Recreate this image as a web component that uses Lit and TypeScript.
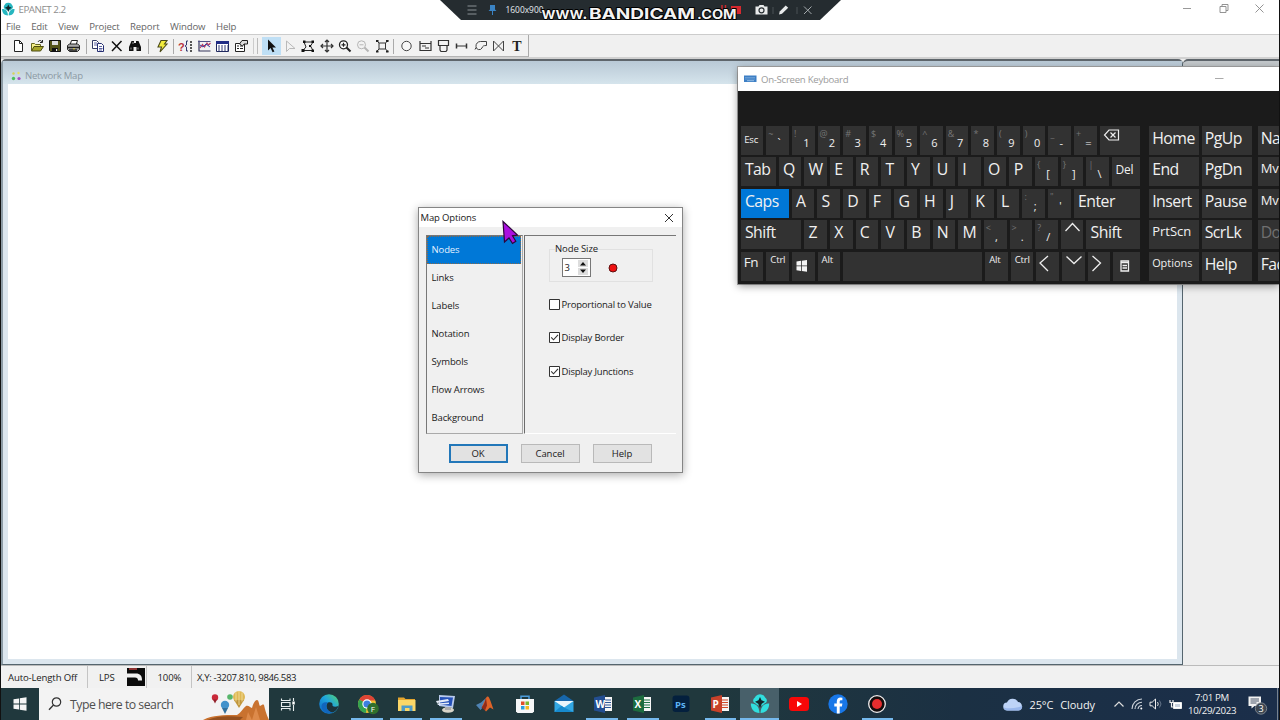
import { LitElement, html, css, svg, nothing } from "lit";
import { customElement } from "lit/decorators.js";

const icon = (w: number, h: number, body: unknown) =>
  html`<svg class="ic" width=${w} height=${h} viewBox="0 0 ${w} ${h}">${body}</svg>`;

const flower = (c: string) => svg`
  <circle cx="10" cy="6" r="5.800" fill=${c}/><circle cx="6" cy="6.500" r="2.800" fill=${c}/><circle cx="14" cy="6.500" r="2.800" fill=${c}/>
  <path d="M.8 9.500c5-.5 8.500 3 8.700 9.500C4 19 .8 15 .8 9.500z" fill=${c}/>
  <path d="M19.200 9.500c-5-.5-8.500 3-8.700 9.500C16 19 19.200 15 19.200 9.500z" fill=${c}/>
  <path d="m10 3 1.500 3.200 3.500 1.500-3.200 2L10 14l-1.800-4.300-3.200-2 3.500-1.500z" fill="#14262b"/>`;

/* Toolbar glyphs, drawn on an 18 x 16 grid */
const T: Record<string, unknown> = {
  new: svg`<path d="M5.500 2.500h5l3 3v8h-8z" fill="#fff" stroke="#222"/><path d="M10.500 2.500v3h3" fill="none" stroke="#222"/>`,
  open: svg`<path d="M3.500 12.500v-7h3l1 1h5v2" fill="#f5f08a" stroke="#66651e"/><path d="M3.500 13 6 8.500h9.500L12.500 13z" fill="#a8a62a" stroke="#4d4b10"/><path d="M10 4c1-2 3-2 4 0m.500-2v2.500H12" fill="none" stroke="#222"/>`,
  save: svg`<path d="M3.500 2.500h11v11h-10l-1-1z" fill="#55551a" stroke="#111"/><path d="M6 3h6v4H6z" fill="#ddd"/><path d="M6 10h6v3.500H6z" fill="#111"/><path d="M10 11h1.200v2H10z" fill="#eee"/>`,
  print: svg`<path d="M6 7 7.500 2.500h6L12 7" fill="#fff" stroke="#222"/><path d="M3.500 7.500 5.500 6h8l2 1.500v4l-2 2h-8l-2-2z" fill="#aaa" stroke="#222"/><path d="M4 9.500h11M5 12h8" stroke="#222" stroke-width="1.300"/><path d="M9 10.800h2" stroke="#dfd23b"/>`,
  copy: svg`<path d="M3.500 2.500h4l2 2v6h-6z" fill="#fff" stroke="#333b66"/><path d="M8.500 5.500h4l2 2v6h-6z" fill="#fff" stroke="#242d72"/><path d="M5 5h3M5 7h3M10 8.500h3M10 10.500h3.500M10 12h3" stroke="#333b88" stroke-width=".8"/>`,
  del: svg`<path d="M4 3.500 13.500 13M13.500 3 4 13" stroke="#111" stroke-width="1.500"/>`,
  find: svg`<path d="M5.500 3h2.500v2h2V3h2.500l2.500 6v4h-4.500V9h-3v4H3V9z" fill="#111"/><path d="M5 9.500v2M12 9.500v2M7 4v2" stroke="#bbb" stroke-width=".8"/>`,
  run: svg`<path d="M8 2.500h6L11.500 6h2.500L7 14l1.500-5H5z" fill="#f2ec3d" stroke="#4b4a18" stroke-width="1.100"/>`,
  query: svg`<text x="2" y="12.500" class="q">?</text><path d="M12 3h-1.500v4L9 8l1.500 1v4H12" fill="none" stroke="#333a70"/><path d="M15 3v11" stroke="#222" stroke-width="1.500" stroke-dasharray="2 1"/>`,
  graph: svg`<path d="M4 2.500V13h11.500" fill="none" stroke="#36365d" stroke-width="1.200"/><path d="M3 3.500h12.500" stroke="#525287"/><path d="m5 10 2.500-3.500L9.500 9l2.500-4 1.500 2 2-2" fill="none" stroke="#b83a63" stroke-width="1.200"/><path d="m5 7 3 2 3-3 4 3" fill="none" stroke="#3b46a5"/>`,
  table: svg`<path d="M3.500 3.500h12v10h-12z" fill="#fff" stroke="#20295f"/><path d="M3 3h13v3H3z" fill="#202c85"/><path d="M5 8h10M5 10h10M5 12h10" stroke="#333b75" stroke-dasharray="2 1"/>`,
  opts: svg`<path d="M3.500 5.500h9v8h-9z" fill="#fff" stroke="#222"/><path d="M5 8h2m1 0h3M5 10.500h2m1 0h3" stroke="#222" stroke-width="1.200"/><path d="M7.500 6 10 2.500h5.500v3.500H12L10.500 8z" fill="#ddd" stroke="#222"/>`,
  arrow: svg`<path d="M6 1.500v11l2.600-2.400 2 4.200 1.800-.9-2-4H14z" fill="#111"/>`,
  vertex: svg`<path d="M5.500 3v10.500l3-3H14z" fill="none" stroke="#b9b9b9"/>`,
  region: svg`<path d="M4 12.500 7 9 5 4h9l-2.500 4 2.500 4.500z" fill="none" stroke="#222"/><path d="M2.500 11h3v3h-3zM4 2.500h2.500V5H4zM12.500 2.500H15V5h-2.500zM12.500 11.500H15V14h-2.500zM10 7h2v2h-2z" fill="#111"/>`,
  pan: svg`<path d="M9 2v12M3 8h12M7 4l2-2 2 2M7 12l2 2 2-2M5 6 3 8l2 2M13 6l2 2-2 2" fill="none" stroke="#333" stroke-width="1.200"/>`,
  zin: svg`<circle cx="7.500" cy="6.800" r="4" fill="#fff" stroke="#222" stroke-width="1.300"/><path d="M5.500 6.800h4M7.500 4.800v4" stroke="#222" stroke-width="1.200"/><path d="m10.500 9.500 4 4" stroke="#222" stroke-width="2"/>`,
  zout: svg`<circle cx="7.500" cy="6.800" r="4" fill="none" stroke="#b5b5b5"/><path d="M5.500 6.800h4" stroke="#b5b5b5"/><path d="m10.500 9.500 4 4" stroke="#b5b5b5" stroke-width="2"/>`,
  full: svg`<path d="M6 5h6.500v6H6z" fill="none" stroke="#333"/><path d="m3.500 2.500 2.500 2.500M15 2.500 12.500 5M3.500 13.500 6 11M15 13.500 12.500 11" stroke="#333"/><path d="M3 2h2.500v2H3zM13 2h2.500v2H13zM3 12.500h2.500v2H3zM13 12.500h2.500v2H13z" fill="#222"/>`,
  node: svg`<circle cx="9.500" cy="8" r="4.700" fill="#f7f7f7" stroke="#444"/>`,
  reservoir: svg`<path d="M4 3v9.500h11V3M4 5.500h11" fill="none" stroke="#333" stroke-width="1.200"/><path d="M6 8h4M9 10h4" stroke="#333" stroke-width="1.200"/>`,
  tank: svg`<path d="M4.500 2.500h10v5h-10zM6 7.500V12l1 1.500h5l1-1.500V7.500" fill="#f4f4f4" stroke="#333" stroke-width="1.200"/>`,
  pipe: svg`<path d="M4 8h11" stroke="#333"/><path d="M4.500 5.500v5M14.500 5.500v5" stroke="#333" stroke-width="1.500"/>`,
  pump: svg`<path d="M15.500 3.500h-6a4.500 4.500 0 0 0-4.500 5 3.200 3.200 0 0 0 6 1.500c.7-2 1.500-2.500 4.500-2.500z" fill="#f4f4f4" stroke="#444"/><path d="m5 9.500-1 2" stroke="#444"/>`,
  valve: svg`<path d="m4.500 3 10 10V3l-10 10z" fill="none" stroke="#444"/>`,
  text: svg`<text x="4.300" y="12.800" class="tt">T</text>`,
};
const bar: string[] = ["new", "open", "save", "print", "|6.4", "copy", "del", "find", "|8.600", "run", "|5.200", "query", "graph", "table", "opts", "grip",
  "arrow", "vertex", "region", "pan", "zin", "zout", "full", "|6", "node", "reservoir", "tank", "pipe", "pump", "valve", "text"];

/* Key: [width, label, kind, shifted label] */
type Key = [number, string, string?, string?];
const U = 22.65;
const rows: Key[][] = [
  [[U, "Esc", "esc"], ...([["`", "~"], ["1", "!"], ["2", "@"], ["3", "#"], ["4", "$"], ["5", "%"], ["6", "^"], ["7", "&"], ["8", "*"], ["9", "("], ["0", ")"], ["-", "_"], ["=", "+"]].map(([a, b]) => [U, a, "two", b]) as Key[]), [40, "bksp", "icon"]],
  [[35, "Tab"], ...([..."QWERTYUIOP"].map((c) => [U, c]) as Key[]), [U, "[", "two", "{"], [U, "]", "two", "}"], [U, "\\", "two", "|"], [27.5, "Del", "mid"]],
  [[48, "Caps", "caps"], ...([..."ASDFGHJKL"].map((c) => [U, c]) as Key[]), [U, ";", "two", ":"], [U, "'", "two", "\""], [66.500, "Enter"]],
  [[60.700, "Shift"], ...([..."ZXCVBNM"].map((c) => [U, c]) as Key[]), [U, ",", "two", "<"], [U, ".", "two", ">"], [U, "/", "two", "?"], [U, "up", "icon"], [53.500, "Shift"]],
  [[U, "Fn", "fn"], [U, "Ctrl", "sm"], [U, "win", "icon"], [U, "Alt", "sm"], [138.900, ""], [U, "Alt", "sm"], [U, "Ctrl", "sm"], [U, "left", "icon"], [U, "down", "icon"], [U, "right", "icon"], [27, "menu", "icon"]],
];
const navRows: Key[][] = [
  [[49.500, "Home"], [50, "PgUp"], [50, "Nav"]],
  [[49.500, "End"], [50, "PgDn"], [50, "Mv Up", "nav2"]],
  [[49.500, "Insert"], [50, "Pause"], [50, "Mv Dn", "nav2"]],
  [[49.500, "PrtScn", "nav2"], [50, "ScrLk"], [50, "Dock", "dim"]],
  [[49.500, "Options", "opt"], [50, "Help"], [50, "Fade"]],
];
const KI: Record<string, unknown> = {
  bksp: svg`<path d="M9 4h9.500v10H9l-4.500-5z" fill="none" stroke="#eee" stroke-width="1.200"/><path d="m10.500 6.500 5 5m0-5-5 5" stroke="#eee" stroke-width="1.200"/>`,
  up: svg`<path d="m4.500 11 7-7.500 7 7.500" fill="none" stroke="#eee" stroke-width="1.300"/>`,
  down: svg`<path d="m4.500 4.500 7.500 7 7.500-7" fill="none" stroke="#eee" stroke-width="1.300"/>`,
  left: svg`<path d="m12 4-8 7 8 8" fill="none" stroke="#eee" stroke-width="1.300"/>`,
  right: svg`<path d="m4.500 4 8 7-8 8" fill="none" stroke="#eee" stroke-width="1.300"/>`,
  win: svg`<path d="m4.500 9.500 4.500-.7v4.700H4.500zM9.800 8.700l5.200-.7v5.500H9.800zM4.500 14.300H9V19l-4.500-.7zM9.800 14.300H15v5.500L9.800 19z" fill="#f4f4f4"/>`,
  menu: svg`<path d="M8 9h7.500v10H8z" fill="none" stroke="#eee" stroke-width="1.300"/><path d="M8 10.500h7.500M9.500 13.500h4.500M9.500 16h4.500" stroke="#eee" stroke-width="1.300"/>`,
};

/* Taskbar icons on a 22 x 22 grid: [body, state] */
const office = (c: string, d: string, l: string) => svg`<path d="M11 4h9v14h-9z" fill="#f6f6f6"/><path d="M13 7h6M13 9.500h6M13 12h6M13 14.500h6" stroke=${c} stroke-width="1.200"/><path d="M2 4.500 13 2v18L2 17.500z" fill=${d}/><text x="3.500" y="15" class="ol">${l}</text>`;
const tasks: [unknown, string][] = [
  [svg`<defs><linearGradient id="eg" x1="0" y1="1" x2="1" y2="0"><stop offset="0" stop-color="#0a63c4"/><stop offset=".55" stop-color="#1fa5dc"/><stop offset="1" stop-color="#57d66b"/></linearGradient></defs><circle cx="11" cy="11" r="9.800" fill="url(#eg)"/><path d="M10 9.500c3-1 5 .5 4.500 2.500-.3 1.600 2.500 2.200 6 1-1 3.500-4 6-6 6.500-5 0-8-7-4.500-10z" fill="#1c3239"/><path d="M10 9.500c-3.500 2-1.500 9 4.500 10-5 2.500-11-1-11-6.500 0-3 3-4.500 6.500-3.500z" fill="#1166bd"/>`, ""],
  [svg`<circle cx="10" cy="11" r="9" fill="#f1c232"/><path d="M10 11 2.300 6.400A9 9 0 0 1 18.300 7.500H10z" fill="#df4435"/><path d="M10 11 2.300 6.400A9 9 0 0 0 9 20z" fill="#33a350"/><circle cx="10" cy="11" r="4.700" fill="#fff"/><circle cx="10" cy="11" r="3.600" fill="#3c7fe0"/><circle cx="16" cy="15.500" r="5.800" fill="#30702c"/><text x="13.700" y="18.500" class="cf">F</text>`, "run"],
  [svg`<path d="M2 4.500h6l1.500 1.500H19v3H2z" fill="#e4a52e"/><path d="M2 7h17.500v11H2z" fill="#fbd768"/><path d="M5.500 18v-5.500h11V18h-3v-3H9v3z" fill="#4e9bc9"/>`, "run"],
  [svg`<path d="m4 2 16 1-2 12-14-2z" fill="#b9cbed"/><path d="m5 4 13 .5-1.500 8.500L5 11.500z" fill="#2551b8"/><path d="m1 8 12-2 1 2L2 10zM2 10.500l12-1v1.500L3 12z" fill="#e4ebf7"/><ellipse cx="13" cy="17" rx="6" ry="2.800" fill="#d9d5c9"/><path d="M10 14h6v3h-6z" fill="#aaa"/>`, "run"],
  [svg`<path d="m2 12 5-2.500 5-4.500-1 7-4.500 5z" fill="#4f83b4"/><path d="M12 5c2-3 3-1 4.500 3l3 8.500-3.500-2-4 4-4-5z" fill="#df6328"/><path d="M12 5c-1 3.500-2 7-4.500 9.500l3.500 3 2-5z" fill="#8e2b1b"/>`, ""],
  [svg`<path d="M7 6V3.200h8V6" fill="none" stroke="#4b9cdc" stroke-width="1.500"/><path d="M2 6h18v12.500l-1.500 1.500h-15L2 18.500z" fill="#f6f7f8"/><path d="M7 8.500h3.500V12H7z" fill="#e14d2a"/><path d="M11.500 8.500H15V12h-3.500z" fill="#7cb82f"/><path d="M7 13h3.500v3.500H7z" fill="#2a9ee0"/><path d="M11.500 13H15v3.500h-3.500z" fill="#f6b825"/>`, ""],
  [svg`<path d="m1.500 8 9.500-6.500L20.500 8z" fill="#1767ac"/><path d="M1.500 8h19v11h-19z" fill="#32a7e3"/><path d="M1.500 8h19L11 14.500z" fill="#eaf5fb"/><path d="m1.500 19 7-6.200L11 14.500l9.500 4.500z" fill="#178acd"/>`, ""],
  [office("#2b579a", "#234e91", "W"), "run"],
  [office("#217346", "#1d6c3f", "X"), "run"],
  [svg`<rect x="2.500" y="2.500" width="17" height="16.500" rx="3" fill="#04203e"/><text x="5" y="14.800" class="ps">Ps</text>`, ""],
  [office("#d24726", "#c7412a", "P"), "run"],
  [svg`<g transform="translate(1 1)">${flower("#31dede")}</g>`, "run active"],
  [svg`<rect x="1" y="4" width="20" height="14" rx="3.500" fill="#f80808"/><path d="m9 8 5 3-5 3z" fill="#fff"/>`, ""],
  [svg`<circle cx="11" cy="11" r="9.700" fill="#1877e8"/><path d="M9.800 20.500v-7H7.300v-3h2.500V8.400c0-2.500 1.500-3.800 3.600-3.800l2 .2v2.500h-1.300c-1.100 0-1.400.7-1.400 1.400v1.800h2.700l-.5 3h-2.200v7z" fill="#fff"/>`, ""],
  [svg`<circle cx="11" cy="11" r="8.300" fill="#150d0d" stroke="#f1eded" stroke-width="1.300"/><circle cx="11" cy="11" r="5" fill="#e52d2e"/>`, "run"],
];

const base = css`
  * { box-sizing: border-box; }
  svg { display: block; flex: none; overflow: visible; }
`;

@customElement("screen-keyboard")
export class ScreenKeyboard extends LitElement {
  static styles = [base, css`
    :host { display: flex; flex-direction: column; width: 541px; height: 217px; background: #1b1b1b; overflow: hidden;
      font-family: "Open Sans", "Noto Sans", sans-serif; }
    .title { height: 24px; background: #fff; display: flex; align-items: center; padding: 0 55px 0 6px; gap: 4px;
      font-size: 9.600px; color: #9c9c9c; }
    .title b { font-weight: 400; flex: 1; letter-spacing: -.27px; }
    .keys { display: flex; gap: 9px; padding: 35px 0 0 2.700px; }
    .block { display: flex; flex-direction: column; gap: 2.700px; flex: none; }
    .row { display: flex; gap: 3px; height: 28.800px; }
    .nav .row > :nth-child(3) { margin-left: 3px; }
    .key { flex: none; background: #323232; color: #f0f0f0; padding: 0 0 0 4.200px; overflow: hidden; white-space: nowrap;
      font-size: 15.800px; line-height: 24px; letter-spacing: -.5px; }
    .nav .key { padding-left: 2.800px; }
    .caps { background: #0077d7; }
    .key.esc { font-size: 9.600px; line-height: 27px; padding-left: 3.500px; letter-spacing: -.2px; }
    .key.sm { font-size: 9.600px; line-height: 16px; padding-left: 4px; letter-spacing: -.2px; }
    .key.fn { font-size: 13.500px; line-height: 20px; padding-left: 3px; }
    .key.mid { font-size: 12px; line-height: 25px; padding-left: 3.500px; letter-spacing: -.2px; }
    .key.nav2 { font-size: 13px; line-height: 22px; letter-spacing: 0; }
    .key.opt { font-size: 10.900px; line-height: 21px; letter-spacing: 0; }
    .dim { color: #707070; }
    .key.icon { padding: 0; }
    .key.two { display: grid; grid-template-columns: 9px 1fr; font-size: 11px; line-height: 16px; padding: 0 0 0 2px; letter-spacing: 0; }
    .two i { font: 9px/12px "Open Sans", sans-serif; color: #757575; padding-top: 2px; }
    .two span { padding: 9px 0 0 .2px; }
  `];
  private key([w, label, kind = "", up]: Key) {
    return html`<div class="key ${kind}" style="width:${w}px">${kind === "icon" ? icon(24, 28, KI[label]) : kind === "two" ? html`<i>${up}</i><span>${label}</span>` : label}</div>`;
  }
  render() {
    return html`
      <div class="title">${icon(13, 8, svg`<rect y=".5" width="12.500" height="6.500" fill="#3d7fc5"/><path d="M1.500 2.500h10M1.500 4h10" stroke="#b9d5f0" stroke-width=".7" stroke-dasharray="1 1"/><path d="M3 5.700h7" stroke="#b9d5f0" stroke-width=".7"/>`)}
        <b>On-Screen Keyboard</b>${icon(9, 2, svg`<path d="M0 .5h8.500" stroke="#aaa"/>`)}</div>
      <div class="keys">
        <div class="block">${rows.map((r) => html`<div class="row">${r.map((k) => this.key(k))}</div>`)}</div>
        <div class="block nav">${navRows.map((r) => html`<div class="row">${r.map((k) => this.key(k))}</div>`)}</div>
      </div>`;
  }
}

@customElement("map-options")
export class MapOptions extends LitElement {
  static styles = [base, css`
    :host { display: flex; flex-direction: column; box-sizing: border-box; width: 265px; height: 266px; border: 1px solid #858585; background: #f0f0f0;
      box-shadow: 0 2px 9px #0005; font: 9.500px "Open Sans", "Noto Sans", sans-serif; color: #202020; letter-spacing: -.2px; }
    .title { height: 19px; flex: none; background: #fff; display: flex; justify-content: space-between; align-items: center; padding: 0 7.500px 0 2px; letter-spacing: -.15px; }
    .body { display: flex; margin: 8px 6px 0 7px; height: 199px; }
    .list { width: 97px; height: 199px; border: 1px solid #777; border-right-color: #aaa; border-bottom-color: #aaa; padding: 0 1px 0 0; letter-spacing: -.12px; }
    .item { height: 28px; line-height: 28px; padding-left: 5px; }
    .on { background: #0078d7; color: #e3f1ff; outline: 1px dotted #8a6a49; outline-offset: -1px; }
    .page { flex: 1; margin-left: 1px; border-left: 1.500px solid #6c6c6c; border-top: 1px solid #777; border-bottom: 1px solid #fff; padding-left: 24px; display: flex; flex-direction: column; }
    .group { width: 104px; height: 39px; margin: 5px 0 0; }
    .legend { height: 16px; line-height: 15px; padding-left: 6.500px; letter-spacing: -.1px; }
    .legend span { background: #f0f0f0; position: relative; }
    .box { margin-top: -8px; height: 33px; border: 1px solid #e1e1e1; display: flex; align-items: center; padding: 4px 0 0 12px; gap: 17px; }
    .spin { width: 29px; height: 19px; border: 1px solid #777; background: #fff; display: flex; padding: 0 2px 0 2px; justify-content: space-between; align-items: center; line-height: 16px; }
    .check { display: flex; gap: 2px; align-items: center; height: 14px; }
    .c1 { margin-top: 17px; } .c2 { margin-top: 19px; } .c3 { margin-top: 20px; }
    .btns { display: flex; gap: 13px; margin: 10px 0 0 30px; letter-spacing: -.05px; }
    .btn { width: 59px; height: 19px; border: 1px solid #b9b9b9; background: #e2e2e2; text-align: center; line-height: 18px; }
    .ok { border: 2px solid #2277b9; line-height: 16px; }
  `];
  private check(label: string, on: boolean, cls: string) {
    return html`<div class="check ${cls}">${icon(11, 11, svg`<path d="M.5.500h10v10H.500z" fill="#fff" stroke="#333"/>${on ? svg`<path d="m2.200 5.300 2.300 2.500 4.500-5" fill="none" stroke="#333" stroke-width="1.100"/>` : nothing}`)}<span>${label}</span></div>`;
  }
  render() {
    return html`
      <div class="title"><span>Map Options</span>${icon(10, 10, svg`<path d="m1 1 8 8m0-8L1 9" stroke="#333"/>`)}</div>
      <div class="body">
        <div class="list">${["Nodes", "Links", "Labels", "Notation", "Symbols", "Flow Arrows", "Background"].map((t, i) => html`<div class="item ${i ? "" : "on"}">${t}</div>`)}</div>
        <div class="page">
          <div class="group"><div class="legend"><span>Node Size</span></div>
            <div class="box"><div class="spin"><span>3</span>${icon(10, 15, svg`<path d="M0 0h10v7H0zM0 8h10v7H0z" fill="#ddd"/><path d="M5 2 8 5.500H2zM5 13l3-3.500H2z" fill="#111"/>`)}</div>
            ${icon(10, 10, svg`<circle cx="5" cy="5" r="4" fill="#ee1111" stroke="#5d1111"/>`)}</div></div>
          ${this.check("Proportional to Value", false, "c1")}${this.check("Display Border", true, "c2")}${this.check("Display Junctions", true, "c3")}
        </div>
      </div>
      <div class="btns"><div class="btn ok">OK</div><div class="btn">Cancel</div><div class="btn">Help</div></div>`;
  }
}

@customElement("app-root")
export class AppRoot extends LitElement {
  static styles = [base, css`
    :host { display: flex; flex-direction: column; position: relative; box-sizing: border-box; width: 1280px; height: 720px; overflow: hidden; background: #f0f0f0;
      border-left: 1px solid #111; border-right: 1px solid #111; font: 10px "Open Sans", "Noto Sans", sans-serif; color: #222; }
    .cap { height: 18px; flex: none; background: #fff; display: flex; align-items: center; padding: 0 15px 0 0; gap: 3.500px; color: #8e8e8e; }
    .cap b { font-weight: 400; flex: 1; font-size: 9.800px; letter-spacing: -.5px; }
    .wins { display: flex; gap: 27px; padding-bottom: 2px; }
    .menu { height: 17px; flex: none; background: #fff; display: flex; gap: 10.600px; padding-left: 5px; line-height: 17px; font-size: 9.600px; color: #666; border-bottom: 1px solid #ccc; letter-spacing: -.15px; }
    .tools { height: 22px; flex: none; display: flex; align-items: center; padding: 1px 0 0 8px; background: #f2f2f2; border-bottom: 1px solid #b4b4b4; width: 528px; border-right: 1px solid #aaa; }
    .tb { width: 18.400px; height: 18px; display: flex; justify-content: center; align-items: center; flex: none; }
    .sel { background: #bfdff5; }
    .sep { flex: none; height: 15px; background: linear-gradient(90deg, #0000 calc(50% - .5px), #aaa calc(50% - .5px) calc(50% + .5px), #0000 calc(50% + .5px)); }
    .grip { width: 12.400px; height: 16px; flex: none; background: linear-gradient(90deg, #0000 3px, #ccc 3px 4px, #0000 4px 7px, #bbb 7px 8px, #0000 8px); }
    .q { font: bold 11px "Liberation Sans", sans-serif; fill: #b8333c; }
    .tt { font: bold 14px "Liberation Serif", serif; fill: #222; }
    .mdi { height: 608px; flex: none; display: flex; border-top: 2px solid #d1d1d1; background: #eee; }
    .child { width: 1182px; height: 606px; border: 1px solid #55656e; border-top: 2px solid #5f666c; border-left: 2px solid #8d9ca6; background: #dce6ee; padding: 0 5px 5px; display: flex; flex-direction: column; border-top-left-radius: 5px; border-top-right-radius: 5px; }
    .ct { height: 23px; margin: 0 -5px; padding: 6px 0 0 8px; background: linear-gradient(#b9c9d6, #d5e4ec); display: flex; align-items: center; gap: 3px; color: #8d9aa4; font-size: 9.600px; letter-spacing: -.25px; }
    .canvas { flex: 1; background: #fff; }
    .side { flex: 1; border-top: 2px solid #5f666c; border-top-left-radius: 5px; background: linear-gradient(#c3c8cb 24px, #eee 24px); }
    .status { height: 23px; flex: none; border-top: 1px solid #bbb; display: flex; align-items: stretch; line-height: 22px; font-size: 9.600px; background: #f1f1f1; letter-spacing: -.15px; }
    .status > div { border-right: 1px solid #c4c4c4; padding: 1px 0 0 7px; display: flex; align-items: center; }
    .s1 { width: 87px; } .status .s2 { width: 59px; gap: 12px; padding-left: 11px; } .status .s3 { width: 45px; padding-left: 10.500px; }
    .status .s4 { border: 0; padding-left: 5px; letter-spacing: -.38px; }
    .task { height: 32px; flex: none; display: flex; background: linear-gradient(90deg, #20383d 0 55%, #1b3043 75%, #1b2e4a); color: #f2f2f2; }
    .start { width: 38px; display: flex; align-items: center; justify-content: center; }
    .search { width: 230px; background: #f3f3f3; color: #4f4f4f; display: flex; align-items: center; font-size: 12.300px; padding-left: 9px; gap: 8px; overflow: hidden; letter-spacing: -.52px; }
    .search span { width: 129px; white-space: nowrap; }
    .view { width: 38px; display: flex; justify-content: center; align-items: center; margin-right: 2px; }
    .apps { display: flex; }
    .app { width: 39.200px; height: 32px; display: flex; justify-content: center; align-items: center; }
    .run { background: linear-gradient(90deg, #0000 3.500px, #76b9ed 3.500px 35.500px, #0000 35.500px) bottom / 100% 2px no-repeat; }
    .active { background: linear-gradient(#76b9ed, #76b9ed) bottom / 100% 2px no-repeat, #48606a; }
    .ol { font: bold 10px "Open Sans", sans-serif; fill: #fff; }
    .cf { font: 8px "Open Sans", sans-serif; fill: #fff; }
    .ps { font: bold 9.500px "Open Sans", sans-serif; fill: #5db4f5; letter-spacing: 0; }
    .tray { margin-left: auto; display: flex; align-items: center; }
    .wx { font-size: 11px; display: flex; gap: 7px; align-items: center; margin-right: 18px; white-space: nowrap; letter-spacing: -.1px; }
    .wx svg { margin-right: -1px; }
    .sys { display: flex; gap: 6px; align-items: center; }
    .clock { font-size: 9.700px; line-height: 13.500px; text-align: center; margin: 0 12px 0 6px; width: 48px; white-space: nowrap; letter-spacing: -.32px; }
    .note { margin: 2px 10px 0 0; }
    .n3 { font: 9px "Open Sans", sans-serif; fill: #fff; }
    .edge { width: 2px; height: 32px; border-left: 1px solid #78838f; }
    .kb { position: absolute; left: 737px; top: 67px; box-shadow: 0 2px 8px #0006, 0 0 0 1px #aaa; }
    .dlg { position: absolute; left: 416.500px; top: 207px; }
    .over { position: absolute; left: 439px; top: 0; }
    .cursor { position: absolute; left: 501px; top: 220px; }
    .res { font: 9.700px "Open Sans", sans-serif; fill: #e8edf0; }
    .wm { font: 700 15px "Inter", sans-serif; fill: #f4f4f4; stroke: #000; stroke-width: 1.800px; paint-order: stroke; stroke-linejoin: round; }
    .thin { font-weight: 600; font-size: 16px; }
    .sc { font-size: 13px; }
  `];
  render() {
    return html`
      <div class="cap">${icon(14, 14, svg`<g transform="translate(.5 .5) scale(.68)">${flower("#26b6bf")}</g>`)}<b>EPANET 2.2</b>
        <div class="wins">${icon(9, 9, svg`<path d="M0 4.500h8" stroke="#999"/>`)}${icon(9, 9, svg`<path d="M1 2.500h6v6H1zM3 2.500v-2h6v6H7" fill="none" stroke="#888" stroke-width=".9"/>`)}${icon(9, 9, svg`<path d="m.5.500 8 8m0-8-8 8" stroke="#888" stroke-width=".9"/>`)}</div></div>
      <div class="menu">${["File", "Edit", "View", "Project", "Report", "Window", "Help"].map((m) => html`<span>${m}</span>`)}</div>
      <div class="tools">${bar.map((b) => b[0] === "|" ? html`<div class="sep" style="width:${b.slice(1)}px"></div>` : b === "grip" ? html`<div class="grip"></div>` : html`<div class="tb ${b === "arrow" ? "sel" : ""}">${icon(18, 16, T[b])}</div>`)}</div>
      <div class="mdi">
        <div class="child"><div class="ct">${icon(11, 10, svg`<circle cx="2.500" cy="2.500" r="1.200" fill="#d6d35a"/><circle cx="7.500" cy="2" r="1.200" fill="#e8df66"/><circle cx="2.500" cy="7.500" r="1.700" fill="#4cc05d"/><circle cx="8" cy="7.500" r="1.600" fill="#a44bc1"/>`)}<span>Network Map</span></div><div class="canvas"></div></div>
        <div class="side"></div>
      </div>
      <div class="status"><div class="s1">Auto-Length Off</div><div class="s2">LPS${icon(18, 18, svg`<path d="M0-1h18v18H0z" fill="#0b0b0b"/><path d="M0 4.500h9c4 0 6 2 6 7h-4c0-2-1-3-3-3H0z" fill="#f1f1f1"/><path d="M2 0h8" stroke="#d44b4b" stroke-width="1.300"/>`)}</div><div class="s3">100%</div><div class="s4">X,Y: -3207.810, 9846.583</div></div>
      <div class="task">
        <div class="start">${icon(14, 14, svg`<path d="m.5 2.200 5.500-.8v5.200H.500zM6.800 1.200l6.700-1v6.400H6.800zM.5 7.400H6v5.200l-5.500-.8zM6.800 7.400h6.700v6.400l-6.700-1z" fill="#f5f5f5"/>`)}</div>
        <div class="search">${icon(14, 14, svg`<circle cx="8.500" cy="5" r="4.200" fill="none" stroke="#333" stroke-width="1.200"/><path d="M5.500 8 1 12.800" stroke="#333" stroke-width="1.300"/>`)}<span>Type here to search</span>
          ${icon(66, 32, svg`<path d="M0 32c10-5 20-5 34-5 4-2 6-7 9-9 3-1 4 2 6 2 1-4 3-8 5-8s2 5 3 6c2-1 3-2 4-1 1 4 2 9 5 15z" fill="#c9722f"/><path d="M4 32c12-5 24-4 36-3l-3 3z" fill="#94501f"/><path d="m49 32 4-13 4 13zM43 32l2-8 4 8z" fill="#dd8a4a"/><circle cx="12" cy="9.500" r="3.200" fill="#c92939"/><path d="m10 11.500 2 4 2-4z" fill="#91202a"/><circle cx="22" cy="17" r="4.200" fill="#4392cb"/><path d="m19 20 3 6 3-6z" fill="#34719c"/><circle cx="27" cy="9" r="2.800" fill="#57b66b"/><circle cx="36" cy="9" r="6" fill="#dfb855"/><path d="m31 12 5 8 5-8z" fill="#c1963c"/><path d="M36 3v14M33 4.500v9M39 4.500v9" stroke="#f3e3a4" stroke-width=".8"/>`)}</div>
        <div class="view">${icon(14, 13, svg`<path d="M.5.500v2h8.500v-2M.500 12.500v-2h8.500v2M.500 4.500h8.500v4H.500zM12.500 0v3M12.500 7v6" fill="none" stroke="#e8eeee" stroke-width="1.100"/><path d="M11.300 3.500h2.500v3h-2.500z" fill="#fff"/>`)}</div>
        <div class="apps">${tasks.map(([b, s]) => html`<div class="app ${s}">${icon(22, 22, b)}</div>`)}</div>
        <div class="tray">
          <div class="wx">${icon(20, 13, svg`<path d="M4.500 12.500a4 4 0 0 1-.5-8A6 6 0 0 1 15 4a4.300 4.300 0 0 1 .500 8.500z" fill="#bdd3f7"/><path d="M4.500 12.500a4 4 0 0 1-3.800-3c5 1.500 12 1 18.500-1.500a4.300 4.300 0 0 1-3.700 4.500z" fill="#99b7ec"/>`)}<span>25°C</span><span>Cloudy</span></div>
          <div class="sys">${icon(12, 8, svg`<path d="m1.500 6.500 4.500-4.500 4.500 4.500" fill="none" stroke="#ddd" stroke-width="1.200"/>`)}
            ${icon(12, 12, svg`<path d="M1 11A10 10 0 0 1 11 1M4 11A7 7 0 0 1 11 4.200M7 11a4 4 0 0 1 4-3.500" fill="none" stroke="#cdd3da" stroke-width="1.100"/><circle cx="10.300" cy="10.500" r="1" fill="#fff"/>`)}
            ${icon(14, 12, svg`<path d="M1 4.200h2.200L6.500 1v10L3.200 7.800H1z" fill="none" stroke="#eee"/><path d="M8.500 4q1.500 2 0 4" fill="none" stroke="#ddd"/><path d="M10.500 2.500q3 3.500 0 7" fill="none" stroke="#66758a"/>`)}
            ${icon(13, 11, svg`<path d="M4.500 3.500h8v6h-8z" fill="#fff" stroke="#eee"/><path d="M6 5h5v3H6z" fill="#c9d2dd"/><path d="M1 1v2.500h3V1M2.500 3.500V8h2" fill="none" stroke="#eee" stroke-width="1.200"/>`)}</div>
          <div class="clock">7:01 PM<br>10/29/2023</div>
          <div class="note">${icon(19, 20, svg`<path d="M.5 1.500h12.500v9.500H6.500L3.500 13.500V11h-3z" fill="#f2f2f2"/><path d="M2.500 4h8.500M2.500 6h8.500M2.500 8h6" stroke="#38465b" stroke-width=".9"/><circle cx="13" cy="13.500" r="5.700" fill="#3e4752" stroke="#8a929b" stroke-width=".8"/><text x="10.500" y="16.800" class="n3">3</text>`)}</div>
          <div class="edge"></div>
        </div>
      </div>
      <screen-keyboard class="kb"></screen-keyboard>
      <map-options class="dlg"></map-options>
      <svg class="cursor" width="16" height="25" viewBox="0 0 16 25"><path d="M1 1.500 15.500 15l-5 .8 3.300 5.500-3.300 2.200L7 18l-4.500 4z" fill="#aa0fe0" stroke="#2b0739" stroke-width="1.200"/></svg>
      <svg class="over" width="403" height="28" viewBox="0 0 403 28">
        <path d="M0 0h401l-21 20H21z" fill="#252c30"/>
        <path d="M27.500 6h9M27.500 10h9M27.500 14h9" stroke="#8b9195"/>
        <path d="M50 5h5v4.500l1.500 1.500h-8L50 9.500z" fill="#3a83c4"/><path d="M52.500 11v4" stroke="#3a83c4"/>
        <text x="65.500" y="13" class="res" textLength="38" lengthAdjust="spacingAndGlyphs">1600x900</text>
        <path d="M282 5v7M285.500 5v7" stroke="#c9292e" stroke-width="1.500"/><path d="M291 6h10v8h-10z" fill="#d6292f"/>
        <path d="M315.500 6.500h3l1-1.500h4l1 1.500h3v8h-12z" fill="#e8eaeb"/><circle cx="321.500" cy="10.300" r="2.500" fill="#e8eaeb" stroke="#252c30" stroke-width="1.200"/>
        <path d="m339 14.500.7-3 6-6 2.500 2.300-6.200 6z" fill="#e8eaeb"/><path d="M333 7v7M357 7v7" stroke="#4a5155"/>
        <path d="m364 6.500 7.500 7.500m0-7.500L364 14" stroke="#a5abae"/>
        <text x="101.500" y="18.500" class="wm thin" textLength="46" lengthAdjust="spacingAndGlyphs">www.</text>
        <text x="149" y="18.500" class="wm" textLength="106" lengthAdjust="spacingAndGlyphs">BANDICAM</text>
        <text x="257" y="18.500" class="wm sc" textLength="39.500" lengthAdjust="spacingAndGlyphs">.COM</text>
      </svg>`;
  }
}
